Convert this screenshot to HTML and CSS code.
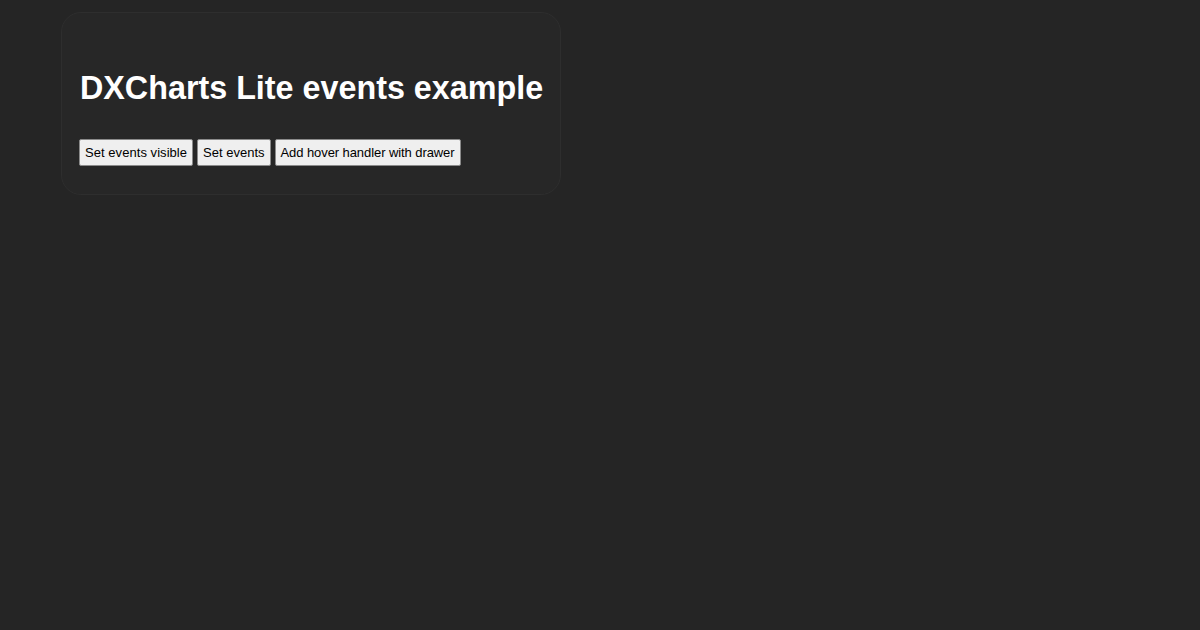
FILE: index.html
```html
<!DOCTYPE html>
<html>
<head>
<meta charset="utf-8">
<link rel="stylesheet" href="styles.css">
</head>
<body>
<div class="page">
  <div class="card">
    <h1 class="title">DXCharts Lite events example</h1>
    <div class="buttons">
      <button class="btn btn-first">Set events visible</button>
      <button class="btn">Set events</button>
      <button class="btn btn-wide">Add hover handler with drawer</button>
    </div>
  </div>
</div>
</body>
</html>
```

FILE: styles.css
```css
html, body {
  margin: 0;
  padding: 0;
  background: #252525;
  font-family: "Liberation Sans", Arial, sans-serif;
}
.page {
  padding: 12px 0 0 61px;
}
.card {
  width: 463px;
  padding: 0 18px 28px 17px;
  border: 1px solid #2e2e2e;
  border-radius: 20px;
  background: #272727;
}
.title {
  margin: 0 0 0 1px;
  padding-top: 57px;
  font-size: 32.3px;
  font-weight: bold;
  color: #ffffff;
  line-height: 37px;
  white-space: nowrap;
}
.buttons {
  display: flex;
  gap: 4px;
  margin-top: 32px;
}
.btn {
  font-family: "Liberation Sans", Arial, sans-serif;
  font-size: 13px;
  height: 27px;
  padding: 0 5px;
  background: #efefef;
  color: #000;
  border: 1px solid #8a8a8a;
  border-radius: 2px;
}
.btn-first {
  letter-spacing: 0.05px;
}
.btn-wide {
  letter-spacing: -0.08px;
}
```
